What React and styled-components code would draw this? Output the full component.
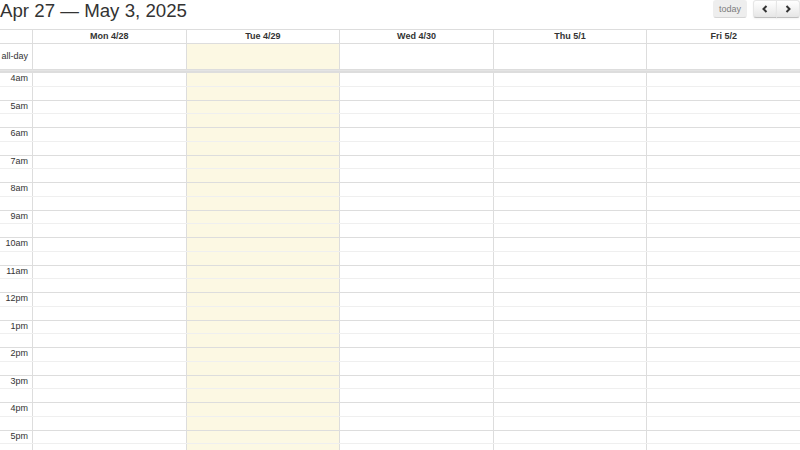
import React from 'react';
import styled, { createGlobalStyle } from 'styled-components';

const GlobalStyle = createGlobalStyle`
  html, body {
    margin: 0;
    padding: 0;
    overflow: hidden;
    background: #fff;
  }
  body {
    font-family: "Liberation Sans", Arial, sans-serif;
    color: #333;
  }
`;

const days = ['Mon 4/28', 'Tue 4/29', 'Wed 4/30', 'Thu 5/1', 'Fri 5/2'];
const todayIndex = 1;
const hours = ['4am', '5am', '6am', '7am', '8am', '9am', '10am', '11am', '12pm', '1pm', '2pm', '3pm', '4pm', '5pm'];

const Page = styled.div`
  width: 800px;
  height: 450px;
  overflow: hidden;
`;

const Toolbar = styled.div`
  display: flex;
  justify-content: space-between;
  align-items: flex-start;
  height: 29px;
`;

const Title = styled.h2`
  margin: 0;
  font-size: 18.7px;
  font-weight: normal;
  line-height: 22px;
  color: #333;
`;

const Buttons = styled.div`
  display: flex;
  gap: 6px;
`;

const Group = styled.div`
  display: flex;
`;

const Button = styled.button`
  height: 18px;
  padding: 0 5px;
  margin: 0;
  font-family: inherit;
  font-size: 9px;
  color: #333;
  border: 1px solid;
  border-color: #e6e6e6 #e6e6e6 #bfbfbf;
  background: linear-gradient(#fff, #e6e6e6);
  box-shadow: inset 0 1px 0 rgba(255,255,255,.2), 0 1px 2px rgba(0,0,0,.05);
  border-radius: ${p => p.$pos === 'left' ? '3px 0 0 3px' : p.$pos === 'right' ? '0 3px 3px 0' : '3px'};
  width: ${p => p.$w || 'auto'};
  display: flex;
  align-items: center;
  justify-content: center;
  ${p => p.disabled && `
    background: #e6e6e6;
    opacity: .65;
    box-shadow: none;
  `}
`;

const Grid = styled.div`
  border-top: 1px solid #ddd;
`;

const Row = styled.div`
  display: grid;
  grid-template-columns: 32px repeat(5, 1fr);
  height: ${p => p.$h};
`;

const HeadCell = styled.div`
  border-left: 1px solid #ddd;
  border-bottom: 1px solid #ddd;
  font-size: 9px;
  font-weight: bold;
  text-align: center;
  line-height: 13px;
  &:first-child { border-left: none; }
`;

const Axis = styled.div`
  font-size: 9px;
  text-align: right;
  padding-right: 4px;
  line-height: ${p => p.$lh};
  white-space: nowrap;
`;

const DayCell = styled.div`
  border-left: 1px solid #ddd;
  background: ${p => p.$today ? '#fcf8e3' : 'transparent'};
`;

const Divider = styled.div`
  height: 1px;
  background: #e4e4e4;
  border-top: 1px solid #ddd;
  border-bottom: 1px solid #ddd;
`;

const SlotRow = styled.div`
  display: grid;
  grid-template-columns: 32px repeat(5, 1fr);
  height: 13.75px;
  box-sizing: border-box;
  border-top: 1px solid ${p => p.$minor ? '#efefef' : '#ddd'};
`;

const SlotLabel = styled.div`
  font-size: 9px;
  text-align: right;
  padding-right: 4px;
  line-height: 11px;
  white-space: nowrap;
`;

const Chevron = ({ dir }) => (
  <svg width="6" height="8" viewBox="0 0 6 8">
    <polyline
      points={dir === 'left' ? '4.5,1 1.5,4 4.5,7' : '1.5,1 4.5,4 1.5,7'}
      fill="none"
      stroke="#333"
      strokeWidth="2"
    />
  </svg>
);

export default function App() {
  return (
    <Page>
      <GlobalStyle />
      <Toolbar>
        <Title>Apr 27 — May 3, 2025</Title>
        <Buttons>
          <Button disabled>today</Button>
          <Group>
            <Button $pos="left" $w="24px"><Chevron dir="left" /></Button>
            <Button $pos="right" $w="24px" style={{ marginLeft: -1 }}><Chevron dir="right" /></Button>
          </Group>
        </Buttons>
      </Toolbar>

      <Grid>
        <Row $h="14px">
          <HeadCell />
          {days.map(d => <HeadCell key={d}>{d}</HeadCell>)}
        </Row>
        <Row $h="25px">
          <Axis $lh="25px">all-day</Axis>
          {days.map((d, i) => <DayCell key={d} $today={i === todayIndex} />)}
        </Row>
        <Divider />
        {hours.map(h => (
          <React.Fragment key={h}>
            <SlotRow>
              <SlotLabel>{h}</SlotLabel>
              {days.map((d, i) => <DayCell key={d} $today={i === todayIndex} />)}
            </SlotRow>
            <SlotRow $minor>
              <SlotLabel />
              {days.map((d, i) => <DayCell key={d} $today={i === todayIndex} />)}
            </SlotRow>
          </React.Fragment>
        ))}
      </Grid>
    </Page>
  );
}
